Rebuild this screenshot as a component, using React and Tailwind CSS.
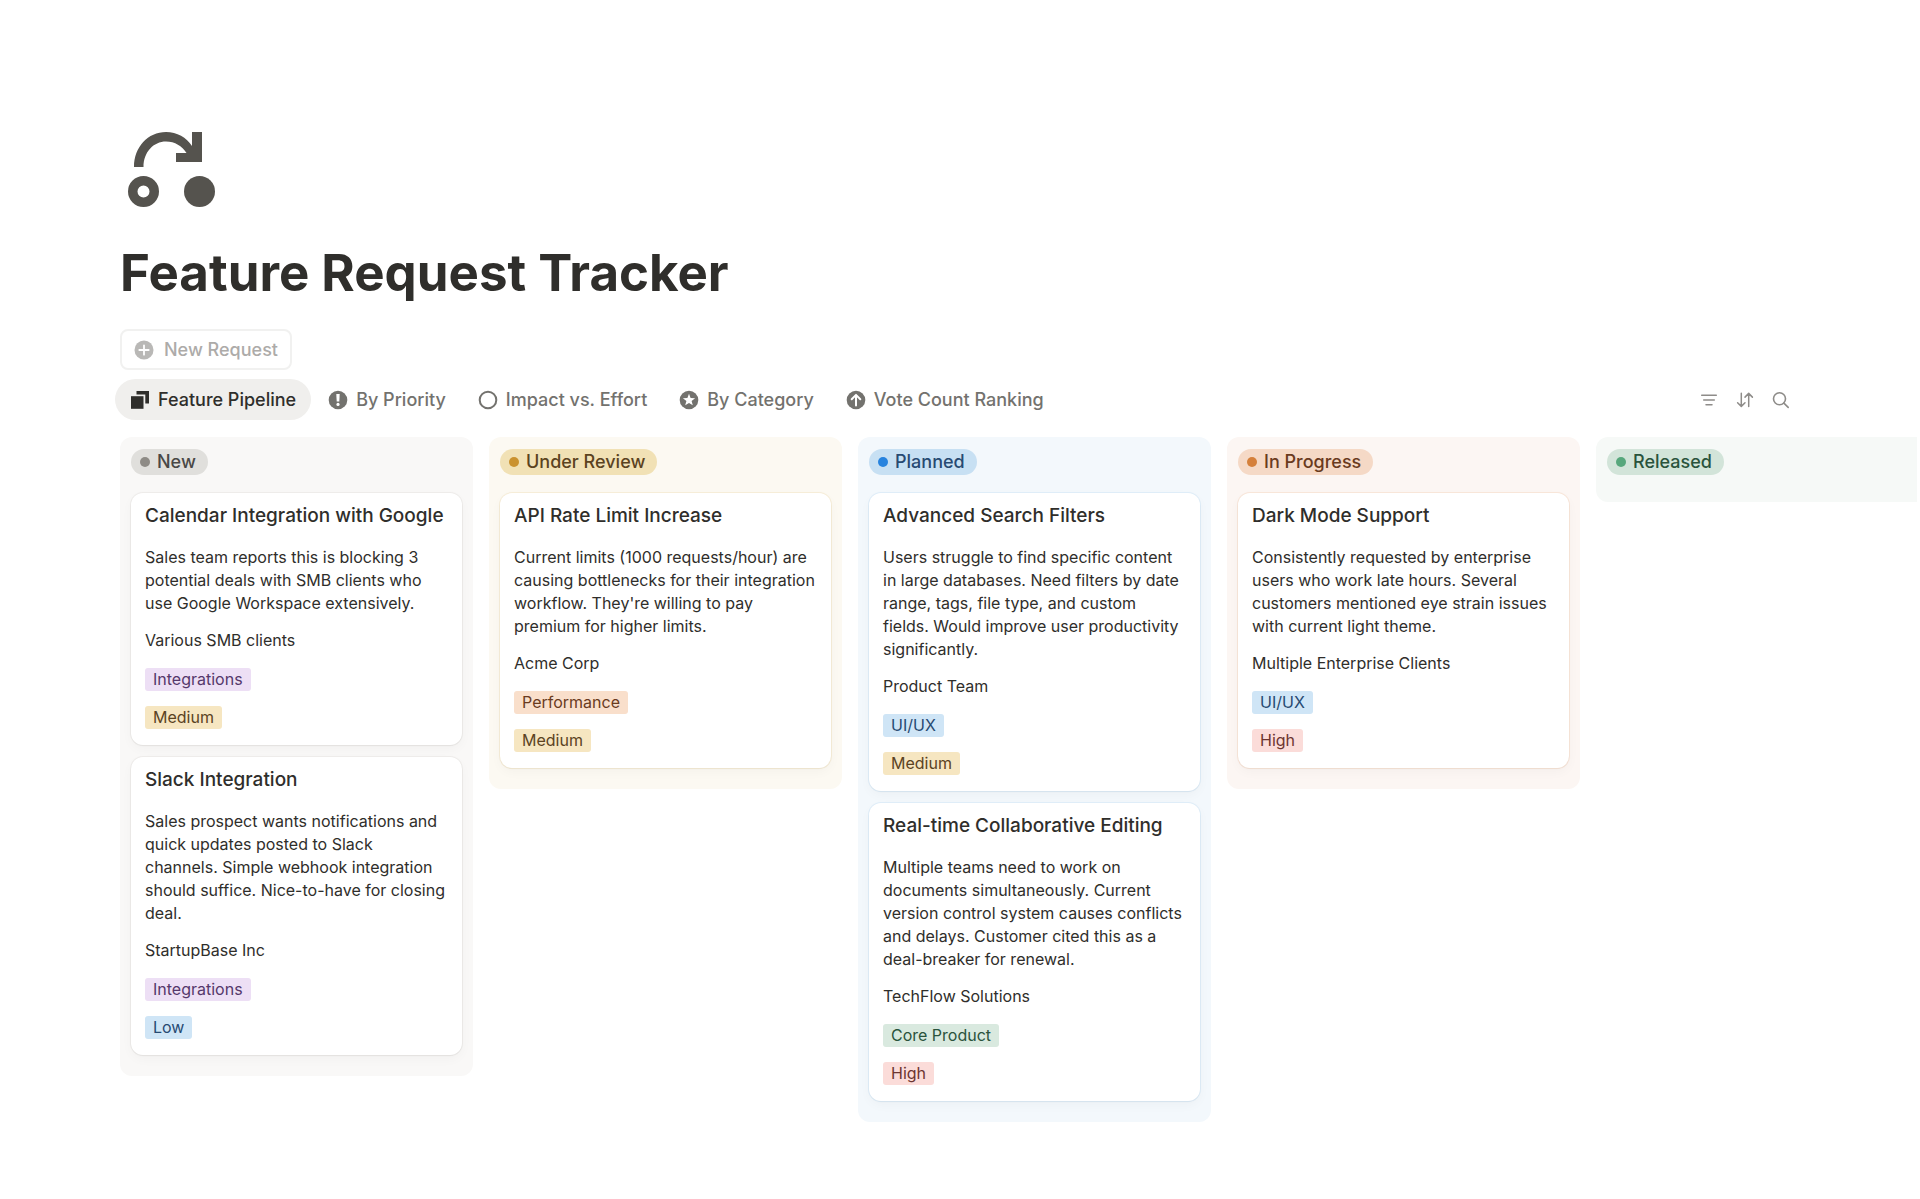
import clsx from "clsx";

const COLUMNS = [
  {
    name: "New",
    column: "bg-[#f9f8f7]",
    pill: "bg-[#e0dfdc] text-[#494846]",
    dot: "bg-[#8e8b86]",
    ring: "shadow-[0_4px_12px_rgba(25,25,25,0.03),0_1px_2px_rgba(25,25,25,0.03),0_0_0_1px_rgba(84,72,49,0.06)]",
    cards: [
      {
        title: "Calendar Integration with Google",
        body: "Sales team reports this is blocking 3 potential deals with SMB clients who use Google Workspace extensively.",
        client: "Various SMB clients",
        tags: ["Integrations", "Medium"],
      },
      {
        title: "Slack Integration",
        body: "Sales prospect wants notifications and quick updates posted to Slack channels. Simple webhook integration should suffice. Nice-to-have for closing deal.",
        client: "StartupBase Inc",
        tags: ["Integrations", "Low"],
      },
    ],
  },
  {
    name: "Under Review",
    column: "bg-[#fcf9f2]",
    pill: "bg-[#f1e1b5] text-[#5b431f]",
    dot: "bg-[#ca922f]",
    ring: "shadow-[0_4px_12px_rgba(25,25,25,0.03),0_1px_2px_rgba(25,25,25,0.03),0_0_0_1px_rgba(205,145,0,0.10)]",
    cards: [
      {
        title: "API Rate Limit Increase",
        body: "Current limits (1000 requests/hour) are causing bottlenecks for their integration workflow. They're willing to pay premium for higher limits.",
        client: "Acme Corp",
        tags: ["Performance", "Medium"],
      },
    ],
  },
  {
    name: "Planned",
    column: "bg-[#f3f8fc]",
    pill: "bg-[#c7e0f3] text-[#274a72]",
    dot: "bg-[#2783de]",
    ring: "shadow-[0_4px_12px_rgba(25,25,25,0.03),0_1px_2px_rgba(25,25,25,0.03),0_0_0_1px_rgba(0,124,215,0.08)]",
    cards: [
      {
        title: "Advanced Search Filters",
        body: "Users struggle to find specific content in large databases. Need filters by date range, tags, file type, and custom fields. Would improve user productivity significantly.",
        client: "Product Team",
        tags: ["UI/UX", "Medium"],
      },
      {
        title: "Real-time Collaborative Editing",
        body: "Multiple teams need to work on documents simultaneously. Current version control system causes conflicts and delays. Customer cited this as a deal-breaker for renewal.",
        client: "TechFlow Solutions",
        tags: ["Core Product", "High"],
      },
    ],
  },
  {
    name: "In Progress",
    column: "bg-[#fcf6f3]",
    pill: "bg-[#f5d9c6] text-[#6a3b1e]",
    dot: "bg-[#d5803b]",
    ring: "shadow-[0_4px_12px_rgba(25,25,25,0.03),0_1px_2px_rgba(25,25,25,0.03),0_0_0_1px_rgba(224,101,1,0.10)]",
    cards: [
      {
        title: "Dark Mode Support",
        body: "Consistently requested by enterprise users who work late hours. Several customers mentioned eye strain issues with current light theme.",
        client: "Multiple Enterprise Clients",
        tags: ["UI/UX", "High"],
      },
    ],
  },
  {
    name: "Released",
    column: "bg-[#f6f9f7]",
    pill: "bg-[#d2e4d9] text-[#2a533c]",
    dot: "bg-[#57a77c]",
    ring: "",
    cards: [],
  },
];

const TAG_COLORS = {
  Integrations: "bg-[#eddff5] text-[#55386b]",
  Performance: "bg-[#f9dfcb] text-[#6a3b1e]",
  "UI/UX": "bg-[#cfe5f6] text-[#274a72]",
  "Core Product": "bg-[#d9e9df] text-[#2a533c]",
  Low: "bg-[#cfe5f6] text-[#274a72]",
  Medium: "bg-[#f6e6c1] text-[#5b431f]",
  High: "bg-[#fbdcd9] text-[#6d3531]",
};

const RouteIcon = () => (
  <svg viewBox="0 0 100 100" className="size-[100px]" fill="#55534e" aria-hidden="true">
    <path d="M14 45C14 25 28 10 46 10C57 10 66.500 15.500 72 24V10H82V40H56V31H66.500C62 24 55 19.500 46 19.500C33.500 19.500 23.500 30 23.500 45Z" />
    <path fillRule="evenodd" d="M23.500 54a15.500 15.500 0 1 1 0 31a15.500 15.500 0 0 1 0-31ZM23.500 63.500a6 6 0 1 0 0 12a6 6 0 0 0 0-12Z" />
    <circle cx="79.500" cy="69.500" r="15.500" />
  </svg>
);

const PlusIcon = () => (
  <svg viewBox="0 0 20 20" className="size-5 text-[#b9b8b6]" fill="none" aria-hidden="true">
    <circle cx="10" cy="10" r="9.500" fill="currentColor" />
    <path d="M10 5.300v9.400M5.300 10h9.400" stroke="#fff" strokeWidth="1.800" strokeLinecap="round" />
  </svg>
);

const StackIcon = () => (
  <svg viewBox="0 0 20 20" className="size-5" fill="currentColor" aria-hidden="true">
    <path d="M1 6.200h12.500v12.600H1Z" />
    <path d="M6.500 1h12.500v12.500h-3.700V4.600H6.500Z" />
  </svg>
);

const AlertIcon = () => (
  <svg viewBox="0 0 20 20" className="size-5" fill="currentColor" aria-hidden="true">
    <circle cx="10" cy="10" r="9.300" />
    <path d="M8.300 4h3.400l-.4 7.600H8.700Z" fill="#fff" />
    <circle cx="10" cy="14.400" r="1.600" fill="#fff" />
  </svg>
);

const CircleIcon = () => (
  <svg viewBox="0 0 20 20" className="size-5" fill="none" aria-hidden="true">
    <circle cx="10" cy="10" r="8.300" stroke="currentColor" strokeWidth="2" />
  </svg>
);

const StarIcon = () => (
  <svg viewBox="0 0 20 20" className="size-5" fill="currentColor" aria-hidden="true">
    <circle cx="10" cy="10" r="9.300" />
    <path
      d="M10 3.800l1.600 4.200 4.500.2-3.500 2.800 1.200 4.300L10 12.900l-3.800 2.400 1.200-4.300-3.500-2.800 4.500-.2Z"
      fill="#fff"
    />
  </svg>
);

const ArrowUpIcon = () => (
  <svg viewBox="0 0 20 20" className="size-5" fill="none" aria-hidden="true">
    <circle cx="10" cy="10" r="9.300" fill="currentColor" />
    <path
      d="M10 15.500V5M5.700 9.200L10 4.900l4.300 4.300"
      stroke="#fff"
      strokeWidth="2"
      strokeLinecap="round"
      strokeLinejoin="round"
    />
  </svg>
);

const FilterIcon = () => (
  <svg viewBox="0 0 20 20" className="size-5" stroke="currentColor" strokeWidth="1.500" strokeLinecap="round" fill="none" aria-hidden="true">
    <path d="M2.700 5.200h14.600M4.700 10h10.600M7 14.700h6" />
  </svg>
);

const SortIcon = () => (
  <svg viewBox="0 0 20 20" className="size-5" stroke="currentColor" strokeWidth="1.500" strokeLinecap="round" strokeLinejoin="round" fill="none" aria-hidden="true">
    <path d="M6.300 3.300v13M2.600 12.700l3.700 3.700 3.700-3.700M13.700 16.500v-13M10 7.100l3.700-3.700 3.700 3.700" />
  </svg>
);

const SearchIcon = () => (
  <svg viewBox="0 0 20 20" className="size-5" stroke="currentColor" strokeWidth="1.600" strokeLinecap="round" fill="none" aria-hidden="true">
    <circle cx="8.500" cy="8.700" r="6" />
    <path d="M12.900 13.100l4.300 4.300" />
  </svg>
);

const TABS = [
  { name: "Feature Pipeline", icon: StackIcon },
  { name: "By Priority", icon: AlertIcon },
  { name: "Impact vs. Effort", icon: CircleIcon },
  { name: "By Category", icon: StarIcon },
  { name: "Vote Count Ranking", icon: ArrowUpIcon },
];

const TOOLS = [
  { name: "Filter", icon: FilterIcon },
  { name: "Sort", icon: SortIcon },
  { name: "Search", icon: SearchIcon },
];

const Tag = ({ name }) => (
  <li className={clsx("w-fit rounded-[3px] px-2 leading-[23px]", TAG_COLORS[name])}>{name}</li>
);

const Card = ({ card, ring }) => (
  <article className={clsx("rounded-xl bg-white px-3.5 pt-2.5 pb-4 text-base", ring)}>
    <h3 className="text-[19px] leading-[25px] font-medium">{card.title}</h3>
    <p className="mt-[18px] leading-[23px]">{card.body}</p>
    <p className="mt-3.5 leading-[23px]">{card.client}</p>
    <ul className="mt-4 flex flex-col gap-[15px]">
      {card.tags.map((tag) => (
        <Tag key={tag} name={tag} />
      ))}
    </ul>
  </article>
);

const Column = ({ column }) => (
  <section className={clsx("w-[353px] shrink-0 rounded-xl px-[11px] pt-3", column.column)}>
    <h2
      className={clsx(
        "flex h-[26px] w-fit items-center gap-[7px] rounded-full pr-3 pl-[9px] text-lg font-medium",
        column.pill
      )}
    >
      <span className={clsx("size-2.5 rounded-full", column.dot)} />
      {column.name}
    </h2>
    <div className="mt-[18px] flex flex-col gap-3 pb-[21px] empty:pb-[9px]">
      {column.cards.map((card) => (
        <Card key={card.title} card={card} ring={column.ring} />
      ))}
    </div>
  </section>
);

export default function App() {
  return (
    <main className="overflow-hidden bg-white pt-[122px] pr-[3px] pb-20 pl-[120px] font-['Inter',sans-serif] text-[#2f2e2b]">
      {/* Page heading */}
      <RouteIcon />
      <h1 className="mt-5 text-[51px] leading-[62px] font-bold">Feature Request Tracker</h1>

      <button
        type="button"
        className="mt-[25px] flex h-[41px] items-center gap-2.5 rounded-lg border-2 border-[#f1f1f0] px-3 text-lg font-medium text-[#adaba9]"
      >
        <PlusIcon />
        New Request
      </button>

      {/* View tabs and tools */}
      <div className="mt-[9px] -ml-[5px] flex items-center justify-between pr-[126px]">
        <nav className="flex gap-0.5">
          {TABS.map(({ name, icon: Icon }, i) => (
            <button
              key={name}
              type="button"
              className={clsx(
                "flex h-[41px] items-center gap-2 rounded-full px-[15px] text-lg font-medium",
                i === 0 ? "bg-[#f0efed] text-[#2f2e2b]" : "text-[#73726e]"
              )}
            >
              <Icon />
              {name}
            </button>
          ))}
        </nav>
        <div className="flex gap-4 text-[#8e8c89]">
          {TOOLS.map(({ name, icon: Icon }) => (
            <button key={name} type="button" aria-label={name}>
              <Icon />
            </button>
          ))}
        </div>
      </div>

      {/* Board */}
      <div className="mt-[17px] flex items-start gap-4 overflow-hidden">
        {COLUMNS.map((column) => (
          <Column key={column.name} column={column} />
        ))}
      </div>
    </main>
  );
}
